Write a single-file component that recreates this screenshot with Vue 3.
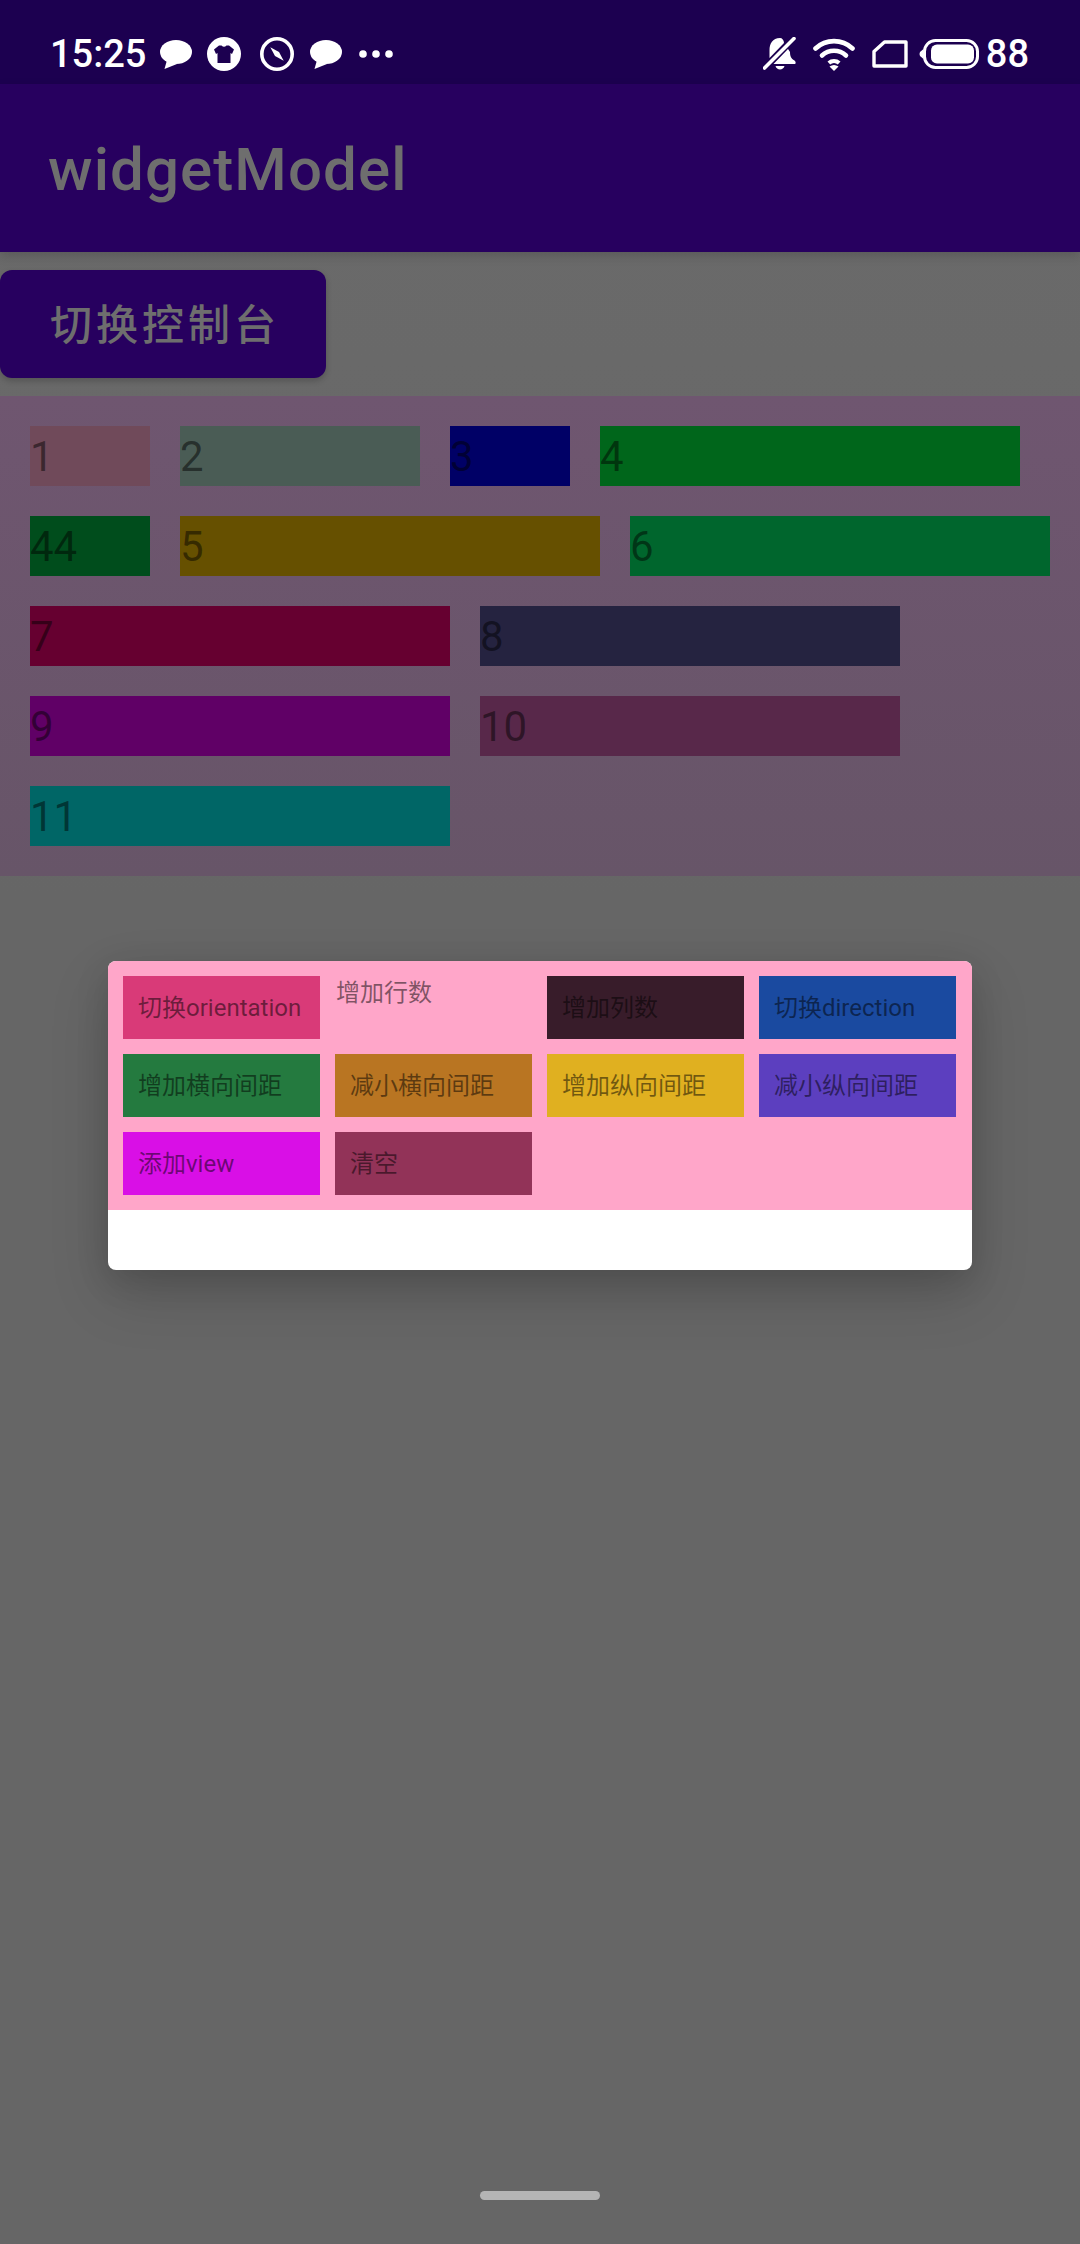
<script setup>
const items = [
  { label: '1', width: 120, color: '#704a5a' },
  { label: '2', width: 240, color: '#4a5c55' },
  { label: '3', width: 120, color: '#000066' },
  { label: '4', width: 420, color: '#00661b' },
  { label: '44', width: 120, color: '#004d1c' },
  { label: '5', width: 420, color: '#665000' },
  { label: '6', width: 420, color: '#00662d' },
  { label: '7', width: 420, color: '#660030' },
  { label: '8', width: 420, color: '#252340' },
  { label: '9', width: 420, color: '#600066' },
  { label: '10', width: 420, color: '#58284a' },
  { label: '11', width: 420, color: '#006666' }
]

const actions = [
  { label: '切换orientation', color: '#d93a78' },
  { label: '增加行数', color: 'transparent', plain: true },
  { label: '增加列数', color: '#381c2a' },
  { label: '切换direction', color: '#1a4aa0' },
  { label: '增加横向间距', color: '#247a3f' },
  { label: '减小横向间距', color: '#b97522' },
  { label: '增加纵向间距', color: '#e0b020' },
  { label: '减小纵向间距', color: '#5c3fbf' },
  { label: '添加view', color: '#d90fe6' },
  { label: '清空', color: '#923358' }
]
</script>

<template>
  <div class="screen">
    <header class="status">
      <div class="status-side">
        <span class="time">15:25</span>
        <svg class="ic-bubble" viewBox="0 0 32 29"><ellipse cx="16" cy="12" rx="16" ry="12" /><path d="M7 20 L4.5 29 L17 24 Z" /></svg>
        <svg class="ic-round" viewBox="0 0 34 34">
          <circle cx="17" cy="17" r="17" />
          <path class="cut" d="M12 8.5 L14.5 8.5 Q17 11 19.5 8.5 L22 8.5 L27 12.5 L25 17 L23.5 16 L23.5 26 L10.5 26 L10.5 16 L9 17 L7 12.5 Z" />
        </svg>
        <svg class="ic-round ic-compass" viewBox="0 0 34 34">
          <circle class="ring" cx="17" cy="17" r="15.2" />
          <path d="M10.3 10.3 L19 15 L23.7 23.7 L15 19 Z" />
        </svg>
        <svg class="ic-bubble ic-bubble-2" viewBox="0 0 32 29"><ellipse cx="16" cy="12" rx="16" ry="12" /><path d="M7 20 L4.5 29 L17 24 Z" /></svg>
        <svg class="ic-dots" viewBox="0 0 34 8"><circle cx="4" cy="4" r="3.8" /><circle cx="17" cy="4" r="3.8" /><circle cx="30" cy="4" r="3.8" /></svg>
      </div>
      <div class="status-side">
        <svg class="ic-bell" viewBox="0 0 34 34">
          <path d="M17 1 C9.5 1 6.5 7 6.5 13 L6.5 21 L21 6 C21 3 19 1 17 1 Z M25 12 L10.5 27 L32 27 C33 27 33 24.5 31.5 23.5 C28 21.5 27 19 27 15 Z" />
          <path d="M12.5 29 L21.5 29 C20.5 33.5 13.5 33.5 12.5 29 Z" />
          <path class="slash" d="M1.5 31 L31 1.5" />
        </svg>
        <svg class="ic-wifi" viewBox="0 0 42 34">
          <path class="arc" d="M2.5 11.5 A27 27 0 0 1 39.5 11.5" />
          <path class="arc" d="M9 18.5 A17.5 17.5 0 0 1 33 18.5" />
          <path d="M14.5 24.5 A10 10 0 0 1 27.5 24.5 L24.8 27.5 A5.5 5.5 0 0 0 17.2 27.5 Z" />
          <path d="M16.5 29.5 L21 34 L25.5 29.5 Q21 26.5 16.5 29.5 Z" />
        </svg>
        <svg class="ic-sim" viewBox="0 0 36 28"><path d="M12.5 2 H34 V26 H2 V11.5 Z" /></svg>
        <svg class="ic-battery" viewBox="0 0 60 30">
          <rect class="outline" x="5.5" y="1.5" width="53" height="27" rx="11" />
          <rect x="12" y="5.5" width="43" height="19" rx="6" />
          <path d="M4.5 10 L1 13 Q0 15 1 17 L4.5 20 Z" />
        </svg>
        <span class="level">88</span>
      </div>
    </header>

    <div class="appbar">widgetModel</div>

    <button class="console">切换控制台</button>

    <section class="flow">
      <div
        v-for="item in items"
        :key="item.label"
        class="chip"
        :style="{ width: item.width + 'px', background: item.color }"
      >{{ item.label }}</div>
    </section>

    <div class="dialog">
      <div class="actions">
        <div
          v-for="a in actions"
          :key="a.label"
          class="action"
          :class="{ plain: a.plain }"
          :style="{ background: a.color }"
        >{{ a.label }}</div>
      </div>
    </div>

    <div class="handle"></div>
  </div>
</template>

<style>
html, body { margin: 0; padding: 0; }
</style>

<style scoped>
.screen {
  position: relative;
  width: 1080px;
  height: 2244px;
  overflow: hidden;
  display: flex;
  flex-direction: column;
  align-items: flex-start;
  background: linear-gradient(#6b6b6b, #666666 40%);
  font-family: Roboto, "Noto Sans CJK SC", sans-serif;
}
.status {
  width: 100%;
  height: 84px;
  box-sizing: border-box;
  padding: 24px 51px 0 50px;
  background: #1c0050;
  color: #fff;
  display: flex;
  align-items: flex-start;
  justify-content: space-between;
  flex: none;
}
.status svg { fill: #fff; display: block; flex: none; }
.status-side {
  display: flex;
  align-items: center;
  height: 60px;
}
.time, .level {
  font-size: 38px;
  font-weight: 500;
  line-height: 60px;
  height: 60px;
}
.ic-bubble { width: 32px; height: 29px; margin-left: 14px; }
.ic-bubble-2 { margin-left: 16px; }
.ic-round { width: 34px; height: 34px; margin-left: 15px; }
.ic-compass { margin-left: 19px; }
.cut { fill: #1c0050; }
.ring { fill: none; stroke: #fff; stroke-width: 3.6; }
.ic-dots { width: 34px; height: 8px; margin-left: 17px; }
.ic-bell { width: 34px; height: 34px; }
.slash { fill: none; stroke: #fff; stroke-width: 3.6; stroke-linecap: round; }
.ic-wifi { width: 42px; height: 34px; margin-left: 16px; }
.arc { fill: none; stroke: #fff; stroke-width: 4.6; stroke-linecap: round; }
.ic-sim { width: 36px; height: 28px; margin-left: 17px; }
.ic-sim path { fill: none; stroke: #fff; stroke-width: 3.4; stroke-linejoin: round; }
.ic-battery { width: 60px; height: 30px; margin-left: 11px; }
.outline { fill: none; stroke: #fff; stroke-width: 3; }
.level { margin-left: 7px; }

.appbar {
  width: 100%;
  height: 168px;
  flex: none;
  box-sizing: border-box;
  padding: 3px 0 0 48px;
  background: #27005f;
  color: #6e6e6e;
  font-size: 60px;
  font-weight: 500;
  letter-spacing: 1.1px;
  line-height: 165px;
  box-shadow: 0 4px 10px rgba(0, 0, 0, 0.15);
  position: relative;
}
.console {
  flex: none;
  width: 326px;
  height: 108px;
  margin: 18px 0 0;
  padding: 0 0 6px 4px;
  border: 0;
  border-radius: 12px;
  background: #27005f;
  color: #6e6e6e;
  font-family: inherit;
  font-size: 42px;
  font-weight: 500;
  letter-spacing: 4px;
  box-shadow: 0 3px 6px rgba(0, 0, 0, 0.2);
}
.flow {
  width: 100%;
  margin-top: 18px;
  box-sizing: border-box;
  padding: 30px;
  display: flex;
  flex-wrap: wrap;
  gap: 30px;
  background: linear-gradient(#6f5670, #675568);
}
.chip {
  height: 60px;
  font-size: 42px;
  line-height: 61px;
  color: rgba(0, 0, 0, 0.48);
}

.dialog {
  position: absolute;
  left: 108px;
  top: 961px;
  width: 864px;
  height: 309px;
  border-radius: 8px;
  background: #fff;
  box-shadow: 0 24px 60px rgba(0, 0, 0, 0.16), 0 10px 34px rgba(0, 0, 0, 0.12);
}
.actions {
  box-sizing: border-box;
  height: 249px;
  padding: 15px;
  display: grid;
  grid-template-columns: repeat(4, 197px);
  grid-auto-rows: 63px;
  gap: 15px;
  background: #ffa6c9;
  border-radius: 8px 8px 0 0;
}
.action {
  padding-left: 15px;
  font-size: 24px;
  line-height: 65px;
  color: rgba(0, 0, 0, 0.5);
  white-space: nowrap;
}
.action.plain {
  padding-left: 1px;
  line-height: 34px;
}
.handle {
  position: absolute;
  left: 480px;
  top: 2191px;
  width: 120px;
  height: 9px;
  border-radius: 5px;
  background: #b5b5b5;
}
</style>
